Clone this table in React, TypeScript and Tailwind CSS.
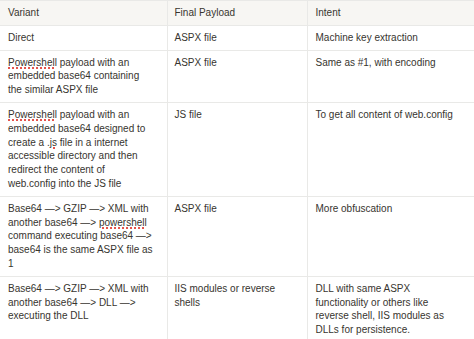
type Line = React.ReactNode;

const rows: { variant: Line[]; payload: Line[]; intent: Line[] }[] = [
  { variant: ["Direct"], payload: ["ASPX file"], intent: ["Machine key extraction"] },
  {
    variant: [
      <>
        <Typo>Powershell</Typo> payload with an
      </>,
      "embedded base64 containing",
      "the similar ASPX file",
    ],
    payload: ["ASPX file"],
    intent: ["Same as #1, with encoding"],
  },
  {
    variant: [
      <>
        <Typo>Powershell</Typo> payload with an
      </>,
      "embedded base64 designed to",
      <>
        create a .<Typo>js</Typo> file in a internet
      </>,
      "accessible directory and then",
      "redirect the content of",
      "web.config into the JS file",
    ],
    payload: ["JS file"],
    intent: ["To get all content of web.config"],
  },
  {
    variant: [
      "Base64 —> GZIP —> XML with",
      <>
        another base64 —&gt; <Typo>powershell</Typo>
      </>,
      "command executing base64 —>",
      "base64 is the same ASPX file as",
      "1",
    ],
    payload: ["ASPX file"],
    intent: ["More obfuscation"],
  },
  {
    variant: ["Base64 —> GZIP —> XML with", "another base64 —> DLL —>", "executing the DLL"],
    payload: ["IIS modules or reverse", "shells"],
    intent: [
      "DLL with same ASPX",
      "functionality or others like",
      "reverse shell, IIS modules as",
      "DLLs for persistence.",
    ],
  },
];

function Typo({ children }: { children: React.ReactNode }) {
  return (
    <span className="underline decoration-dotted decoration-[#e5534b] decoration-[1.5px] underline-offset-2">
      {children}
    </span>
  );
}

function Lines({ lines }: { lines: Line[] }) {
  return (
    <>
      {lines.map((l, i) => (
        <div key={i} className="whitespace-nowrap">
          {l}
        </div>
      ))}
    </>
  );
}

export default function App() {
  return (
    <div className="w-[474px] h-[339px] overflow-hidden bg-white font-['Liberation_Sans',Arial,sans-serif] text-[10px] leading-[13.8px] text-[#37352f]">
      <table className="w-[500px] table-fixed border-collapse">
        <colgroup>
          <col className="w-[167px]" />
          <col className="w-[140px]" />
          <col />
        </colgroup>
        <thead>
          <tr className="bg-[#f7f6f3]">
            <th className="border border-[#e9e9e7] border-l-0 px-2 py-[5px] text-left font-normal">Variant</th>
            <th className="border border-[#e9e9e7] px-[7px] py-[5px] text-left font-normal">Final Payload</th>
            <th className="border border-[#e9e9e7] px-2 py-[5px] text-left font-normal">Intent</th>
          </tr>
        </thead>
        <tbody>
          {rows.map((r, i) => (
            <tr key={i}>
              <td className="border border-[#e9e9e7] border-l-0 px-2 py-[5px] align-top">
                <Lines lines={r.variant} />
              </td>
              <td className="border border-[#e9e9e7] px-[7px] py-[5px] align-top">
                <Lines lines={r.payload} />
              </td>
              <td className="border border-[#e9e9e7] px-2 py-[5px] align-top">
                <Lines lines={r.intent} />
              </td>
            </tr>
          ))}
        </tbody>
      </table>
    </div>
  );
}
